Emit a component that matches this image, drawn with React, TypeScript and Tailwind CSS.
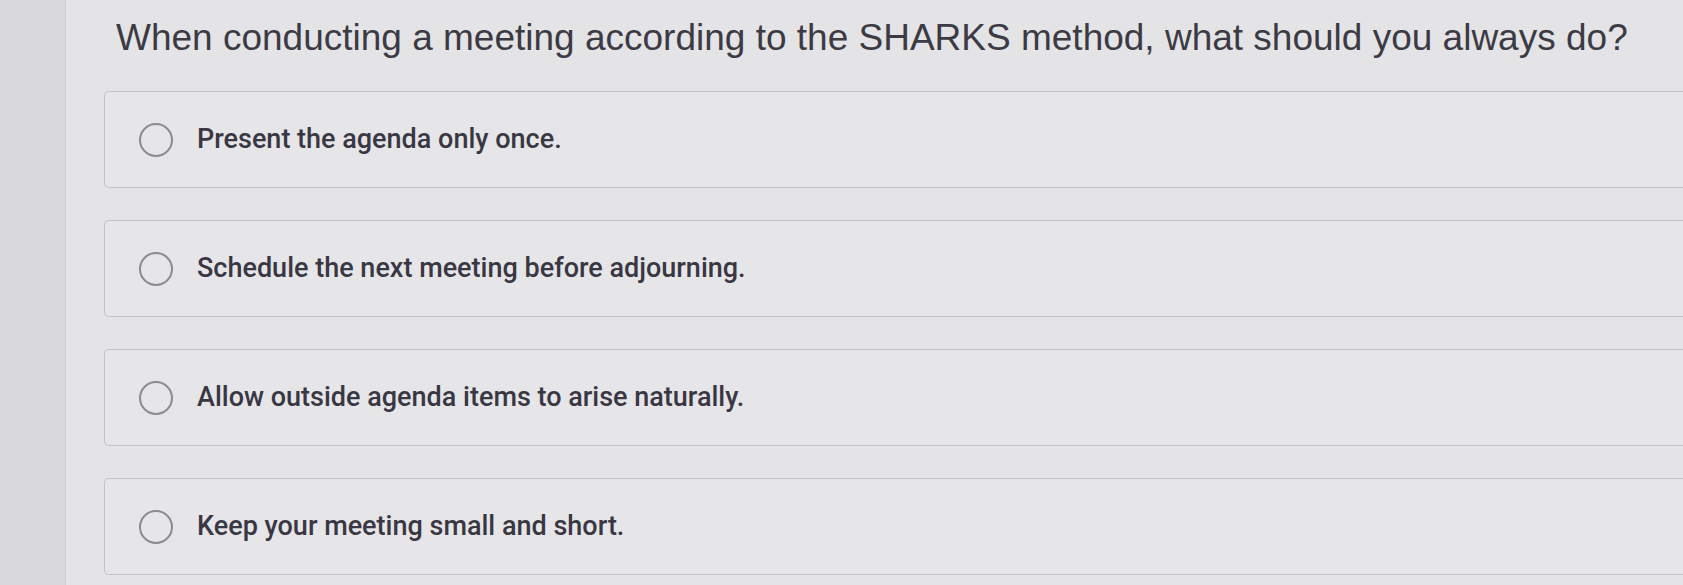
const options = [
  "Present the agenda only once.",
  "Schedule the next meeting before adjourning.",
  "Allow outside agenda items to arise naturally.",
  "Keep your meeting small and short.",
];

function Option({ label }: { label: string }) {
  return (
    <div className="flex h-[97px] items-center gap-[24px] rounded-l-[5px] border border-r-0 border-[#c3c3c6] bg-[#e6e6e8] pl-[34px]">
      <span className="h-[34px] w-[34px] shrink-0 rounded-full border-2 border-[#8d8a93]" />
      <span
        className="text-[27px] font-medium text-[#3a3744]"
        style={{ fontFamily: "Roboto, 'Liberation Sans', sans-serif" }}
      >
        {label}
      </span>
    </div>
  );
}

export default function App() {
  return (
    <div className="flex h-[585px] w-full overflow-hidden bg-[#e4e4e6]">
      <div className="w-[66px] shrink-0 border-r border-[#cdcdd0] bg-[#dadadc]" />
      <div className="flex flex-1 flex-col">
        <h1
          className="pl-[50px] pt-[15px] text-[37px] leading-[45px] font-normal text-[#3c3a44]"
          style={{ fontFamily: "'Liberation Sans', Arial, sans-serif" }}
        >
          When conducting a meeting according to the SHARKS method, what should you always do?
        </h1>
        <div className="mt-[31px] flex flex-col gap-[32px] pl-[38px]">
          {options.map((o) => (
            <Option key={o} label={o} />
          ))}
        </div>
      </div>
    </div>
  );
}
